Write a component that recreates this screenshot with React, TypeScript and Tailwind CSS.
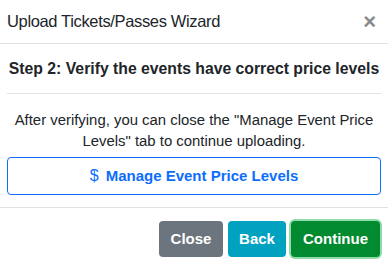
import React from "react";

const App = () => {
  return (
    <div className="w-[388px] h-[267px] bg-white text-[#212529] font-['Liberation_Sans',Arial,sans-serif]">
      <div className="flex items-center justify-between h-[44px] border-b border-[#dee2e6] pl-[7px] pr-[12px]">
        <span className="text-[16.5px] tracking-[-0.35px] leading-none">Upload Tickets/Passes Wizard</span>
        <span className="text-[22px] font-bold leading-none text-[#8a8a8a]">×</span>
      </div>
      <div className="px-[7px]">
        <div className="h-[50px] flex items-center justify-center border-b border-[#dee2e6] text-[15.75px] font-bold">
          Step 2: Verify the events have correct price levels
        </div>
        <p className="mt-[16px] text-center text-[14.9px] leading-[21px] px-[4px]">
          After verifying, you can close the "Manage Event Price Levels" tab to continue uploading.
        </p>
        <button className="mt-[5px] w-full h-[38px] flex items-center justify-center gap-[7px] border border-[#0d6efd] rounded-[4px] text-[#0d6efd] text-[15px] font-bold">
          <span className="font-normal text-[16px]">$</span>
          <span>Manage Event Price Levels</span>
        </button>
      </div>
      <div className="mt-[12px] border-t border-[#dee2e6] flex justify-end gap-[5px] pt-[13px] pr-[8px]">
        <button className="w-[64px] h-[36px] rounded-[4px] bg-[#6c757d] text-white font-bold text-[15px]">Close</button>
        <button className="w-[58px] h-[36px] rounded-[4px] bg-[#00a2c0] text-white font-bold text-[15px]">Back</button>
        <button className="w-[89px] h-[36px] rounded-[4px] bg-[#028a30] text-white font-bold text-[15px] ring-2 ring-[#8fdcaa]">Continue</button>
      </div>
    </div>
  );
};

export default App;
